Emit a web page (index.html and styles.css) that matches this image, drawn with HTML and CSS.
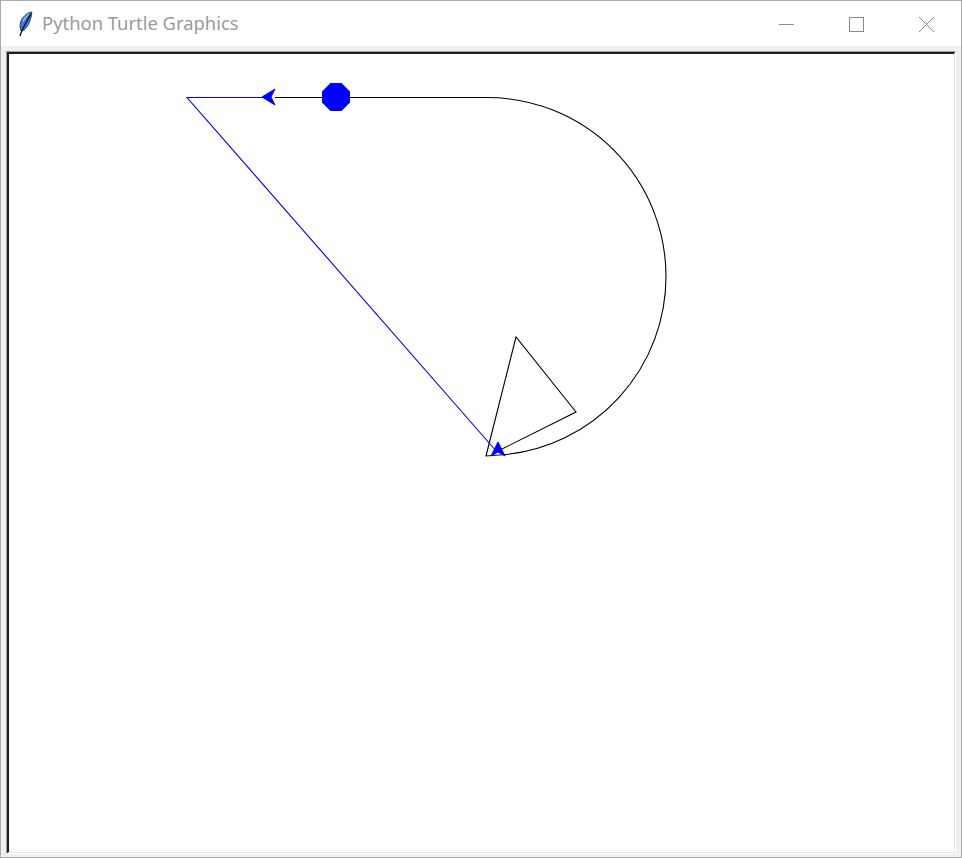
FILE: index.html
```html
<!DOCTYPE html>
<html>
<head>
<meta charset="utf-8">
<title>Python Turtle Graphics</title>
<link rel="stylesheet" href="styles.css">
</head>
<body>
<div class="window">
  <div class="titlebar">
    <div class="title-left">
      <svg class="app-icon" width="16" height="26" viewBox="0 0 16 26">
        <path d="M14.8 1 C10 1.8 5.2 6 3.6 11.2 C2.6 14.6 3.2 17.8 4.4 20.4 C7.2 19.6 10.2 16.2 12 12 C13.6 8.2 14.6 4.6 14.8 1 Z" fill="#3b7de3" stroke="#1a3a78" stroke-width="1"/>
        <path d="M5.6 10.5 C7.2 8 9.4 5 12.6 2.6" stroke="#a8ccff" stroke-width="1.1" fill="none"/>
        <path d="M13.8 2.6 C10.8 8 7.6 14 4.6 20.2 L3 25" stroke="#111" stroke-width="1.3" fill="none"/>
      </svg>
      <span class="title-text">Python Turtle Graphics</span>
    </div>
    <div class="controls">
      <div class="ctl">
        <svg width="16" height="16" viewBox="0 0 16 16"><path d="M1 8.5 H16" stroke="#8a8a8a" stroke-width="1"/></svg>
      </div>
      <div class="ctl">
        <svg width="16" height="16" viewBox="0 0 16 16"><rect x="1.5" y="1.5" width="14" height="14" fill="none" stroke="#8a8a8a" stroke-width="1"/></svg>
      </div>
      <div class="ctl">
        <svg width="16" height="16" viewBox="0 0 16 16"><path d="M1 1 L16 16 M16 1 L1 16" stroke="#8a8a8a" stroke-width="1"/></svg>
      </div>
    </div>
  </div>
  <div class="client">
    <div class="canvas-frame">
      <div class="canvas">
        <svg class="drawing" width="944" height="797" viewBox="0 0 944 797">
          <g transform="translate(-9,-54)">
            <path d="M275 97.5 H487 A179 179 0 0 1 666 276.5 A179 179 0 0 1 503 454.78 L486 456 L516 337 L576 412 L496 452" fill="none" stroke="#000" stroke-width="1.1"/>
            <path d="M497 452 L187 97.5 H268" fill="none" stroke="#0000ff" stroke-width="1.1"/>
            <polygon points="262,97 275,89 271,97 275,105" fill="#0000ff" stroke="#0000ff" stroke-width="1"/>
            <polygon points="330.5,83 341.5,83 350,91.5 350,102.5 341.5,111 330.5,111 322,102.5 322,91.5" fill="#0000ff"/>
            <polygon points="498,442 505,456 498,452 491,456" fill="#0000ff" stroke="#0000ff" stroke-width="1"/>
          </g>
        </svg>
      </div>
    </div>
  </div>
</div>
</body>
</html>
```

FILE: styles.css
```css
html, body {
  margin: 0;
  padding: 0;
  background: #ffffff;
}

.window {
  width: 962px;
  height: 858px;
  box-sizing: border-box;
  border: 1px solid #ababab;
  display: flex;
  flex-direction: column;
  background: #f0f0f0;
}

.titlebar {
  height: 45px;
  flex: none;
  background: #ffffff;
  display: flex;
  align-items: center;
  justify-content: space-between;
}

.title-left {
  display: flex;
  align-items: center;
  padding-left: 16px;
  gap: 9px;
}

.app-icon {
  display: block;
}

.title-text {
  font-family: "Noto Sans", "Open Sans", sans-serif;
  font-size: 18.4px;
  line-height: 24px;
  color: #9a9a9a;
  margin-top: -2px;
}

.controls {
  display: flex;
  height: 100%;
}

.ctl {
  width: 70px;
  display: flex;
  align-items: center;
  justify-content: center;
}

.ctl svg {
  display: block;
}

.client {
  flex: 1;
  padding: 5px 5px 3px 5px;
  display: flex;
}

.canvas-frame {
  flex: 1;
  border-style: solid;
  border-width: 1px;
  border-color: #a0a0a0 #ffffff #ffffff #a0a0a0;
  display: flex;
}

.canvas {
  flex: 1;
  background: #ffffff;
  border-style: solid;
  border-width: 2px 1px 1px 2px;
  border-color: #1e1e1e #e3e3e3 #e3e3e3 #1e1e1e;
  overflow: hidden;
}

.drawing {
  display: block;
}
```
